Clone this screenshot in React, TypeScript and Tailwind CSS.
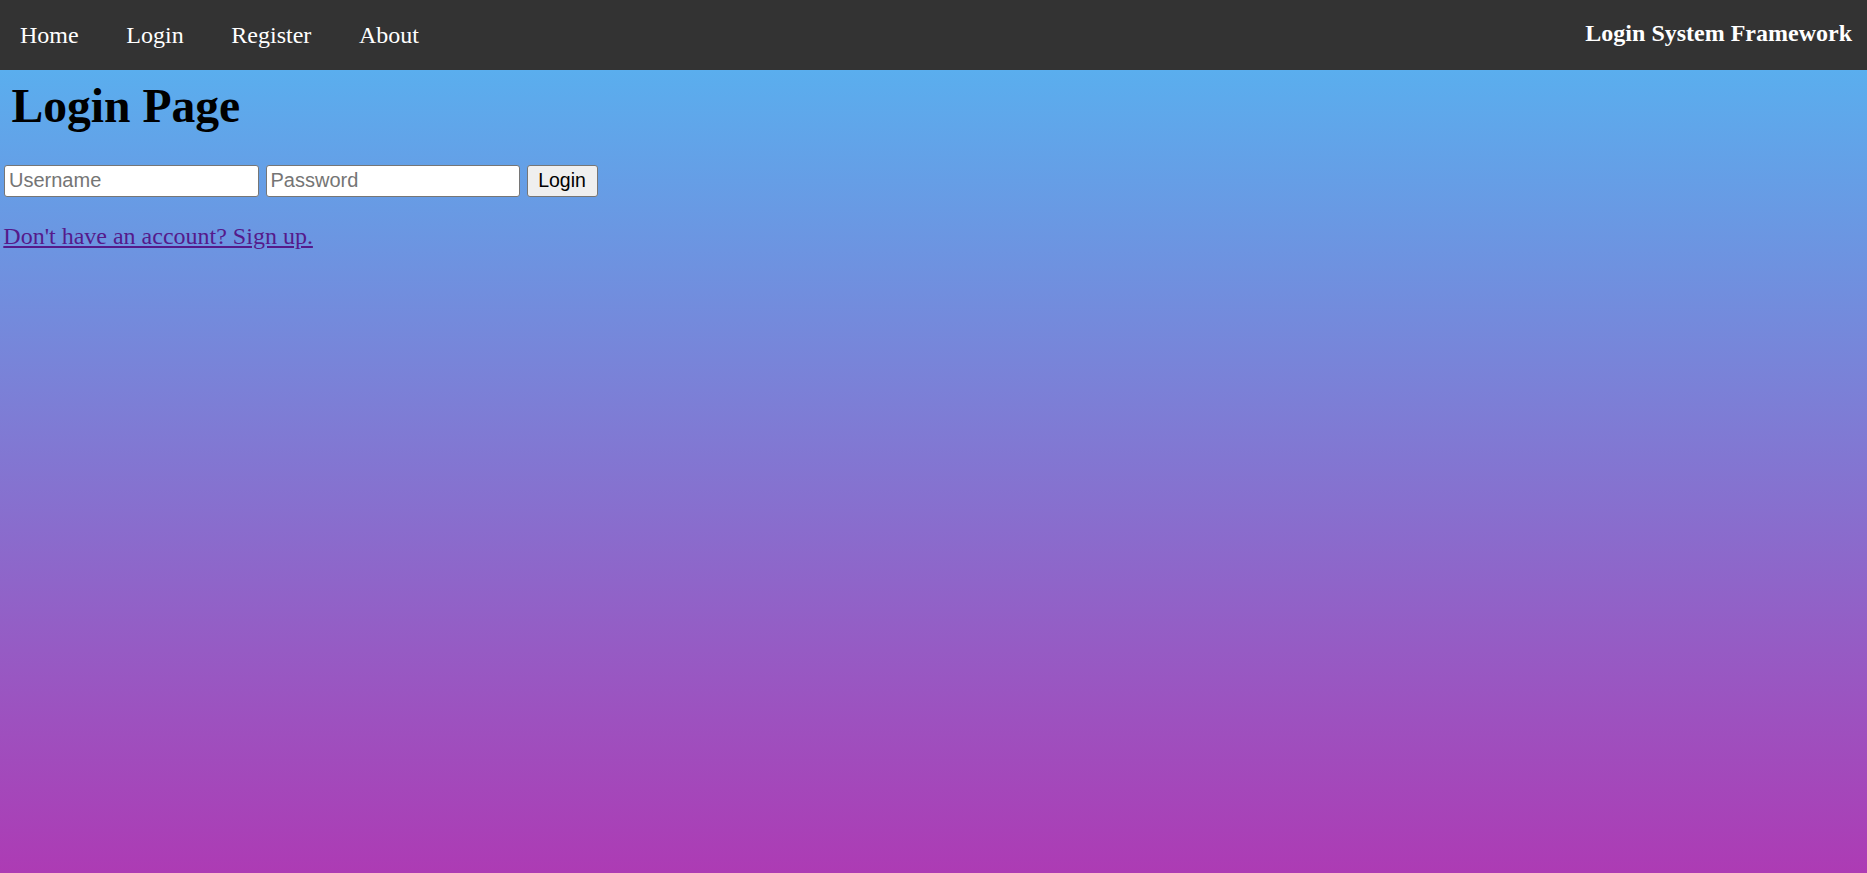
import React from "react";

export default function App() {
  return (
    <div
      className="min-h-[873px] w-full bg-[linear-gradient(to_bottom,#5aaeee_70px,#ad3bb4_100%)]"
      style={{ fontFamily: '"Liberation Serif", "Times New Roman", serif' }}
    >
      <nav className="h-[70px] bg-[#333333] flex items-center justify-between text-white text-[24px] leading-[27px]">
        <div className="flex items-center gap-[7.7px]">
          <a href="#" className="px-[20px] text-white no-underline">Home</a>
          <a href="#" className="px-[20px] text-white no-underline">Login</a>
          <a href="#" className="px-[20px] text-white no-underline">Register</a>
          <a href="#" className="px-[20px] text-white no-underline">About</a>
        </div>
        <div className="pr-[15px] pb-[3px] font-bold">Login System Framework</div>
      </nav>
      <div className="px-[4px]">
        <h1 className="mt-[8.6px] pl-[7.5px] text-[47.6px] leading-[54px] font-bold text-black">
          Login Page
        </h1>
        <form
          className="mt-[32.3px] flex items-center gap-[7px]"
          onSubmit={(e) => e.preventDefault()}
          style={{ fontFamily: '"Liberation Sans", Arial, sans-serif' }}
        >
          <input
            type="text"
            placeholder="Username"
            className="w-[254.5px] h-[31.7px] bg-white border border-[#767676] rounded-[3px] pl-[4px] text-[20px] text-black placeholder:text-[#757575] outline-none"
          />
          <input
            type="password"
            placeholder="Password"
            className="w-[254px] h-[31.7px] bg-white border border-[#767676] rounded-[3px] pl-[4px] text-[20px] text-black placeholder:text-[#757575] outline-none"
          />
          <button
            type="submit"
            className="w-[71px] h-[31.7px] bg-[#efefef] border border-[#767676] rounded-[3px] text-[19.5px] text-black flex items-center justify-center"
          >
            Login
          </button>
        </form>
        <div className="mt-[25.5px] text-[24px] leading-[28px]">
          <a href="#" className="text-[#551a8b] underline -ml-[0.7px]">
            Don't have an account? Sign up.
          </a>
        </div>
      </div>
    </div>
  );
}
